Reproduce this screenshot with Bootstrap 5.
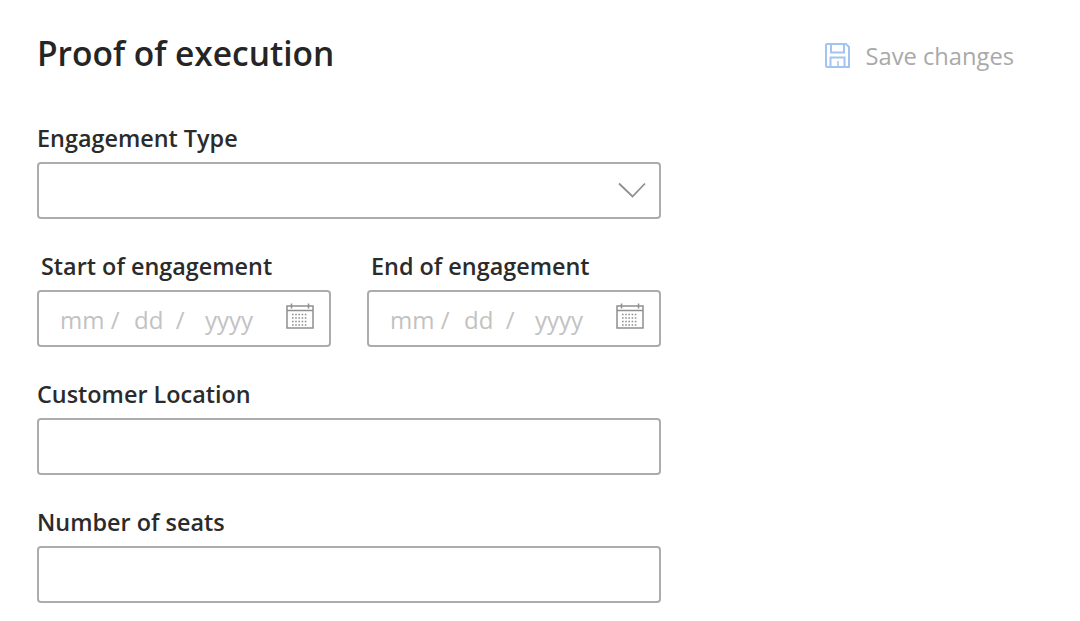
<!DOCTYPE html>
<html lang="en"><head><meta charset="utf-8">
<link href="https://cdn.jsdelivr.net/npm/bootstrap@5.3.0/dist/css/bootstrap.min.css" rel="stylesheet">
<style>
html,body{background:#fff;height:621px;overflow:hidden}
body{font-family:"Open Sans","Noto Sans","Liberation Sans",sans-serif;color:#252525}
.page-wrap{padding:31px 66px 0 37px}
.page-title{font-size:33.5px;font-weight:600;line-height:44px;margin:0;color:#252525}
.save-btn{color:#a9a9a9;font-size:23.7px;background:none;border:0;padding:0;gap:16px;margin-top:7px}
.save-btn svg{margin-top:-2px}
.form-area{width:624px;margin-top:47px}
.fld-label{font-size:23.4px;font-weight:600;line-height:32px;margin-bottom:8px;display:block;color:#2b2b2b}
.fld-box{height:57px;border:2px solid #acacac;border-radius:4px;background:#fff;width:100%}
.fld-gap{margin-top:31px}
.two{gap:36px}
.two>div{flex:1 1 0}
.date-text{color:#c2c2c2;font-size:24px;padding:0 15px 0 21px}
.date-parts{margin-top:2px}
.date-text svg{margin-top:-6px}
.dp-mm{width:74px}
.dp-dd{width:71px}
.chev{margin-right:12px;margin-top:-2px}
</style></head><body>
<div class="page-wrap">
<div class="d-flex justify-content-between align-items-center">
<h1 class="page-title">Proof of execution</h1>
<button class="save-btn d-flex align-items-center" type="button" disabled>
<svg width="25" height="25" viewBox="0 0 25 25" fill="none" stroke="#a3c4ee" stroke-width="2"><path d="M2 1h19l3 3v20H2a1 1 0 0 1-1-1V2a1 1 0 0 1 1-1z"/><path d="M6 1.500v8h13v-8"/><path d="M5.500 24v-9.500h14V24"/><path d="M13 18v6" stroke-width="1.500"/></svg>
<span>Save changes</span></button>
</div>
<div class="form-area">
<label class="fld-label">Engagement Type</label>
<div class="fld-box d-flex align-items-center justify-content-end"><svg class="chev" width="30" height="16" viewBox="0 0 30 16" fill="none" stroke="#8f8f8f" stroke-width="1.800"><path d="M2 1.500l13.500 13L28 1.500"/></svg></div>
<div class="d-flex two fld-gap">
<div><label class="fld-label ps-1">Start of engagement</label>
<div class="fld-box d-flex align-items-center justify-content-between date-text"><span class="d-flex date-parts"><span class="dp-mm">mm /</span><span class="dp-dd">dd &nbsp;/</span><span>yyyy</span></span><svg width="28" height="28" viewBox="0 0 28 28" fill="none" stroke="#8f8f8f" stroke-width="1.500"><rect x="1" y="4" width="26" height="22"/><path d="M1 8.500h26M5.500 1.500v5M22.500 1.500v5"/><path stroke-width="1.600" stroke-dasharray="1.600 1.600" d="M6 12.500h16M6 16h16M6 19.500h16M6 23h16"/></svg></div></div>
<div><label class="fld-label ps-1">End of engagement</label>
<div class="fld-box d-flex align-items-center justify-content-between date-text"><span class="d-flex date-parts"><span class="dp-mm">mm /</span><span class="dp-dd">dd &nbsp;/</span><span>yyyy</span></span><svg width="28" height="28" viewBox="0 0 28 28" fill="none" stroke="#8f8f8f" stroke-width="1.500"><rect x="1" y="4" width="26" height="22"/><path d="M1 8.500h26M5.500 1.500v5M22.500 1.500v5"/><path stroke-width="1.600" stroke-dasharray="1.600 1.600" d="M6 12.500h16M6 16h16M6 19.500h16M6 23h16"/></svg></div></div>
</div>
<div class="fld-gap"><label class="fld-label">Customer Location</label><div class="fld-box"></div></div>
<div class="fld-gap"><label class="fld-label">Number of seats</label><div class="fld-box"></div></div>
</div>
</div>
</body></html>
